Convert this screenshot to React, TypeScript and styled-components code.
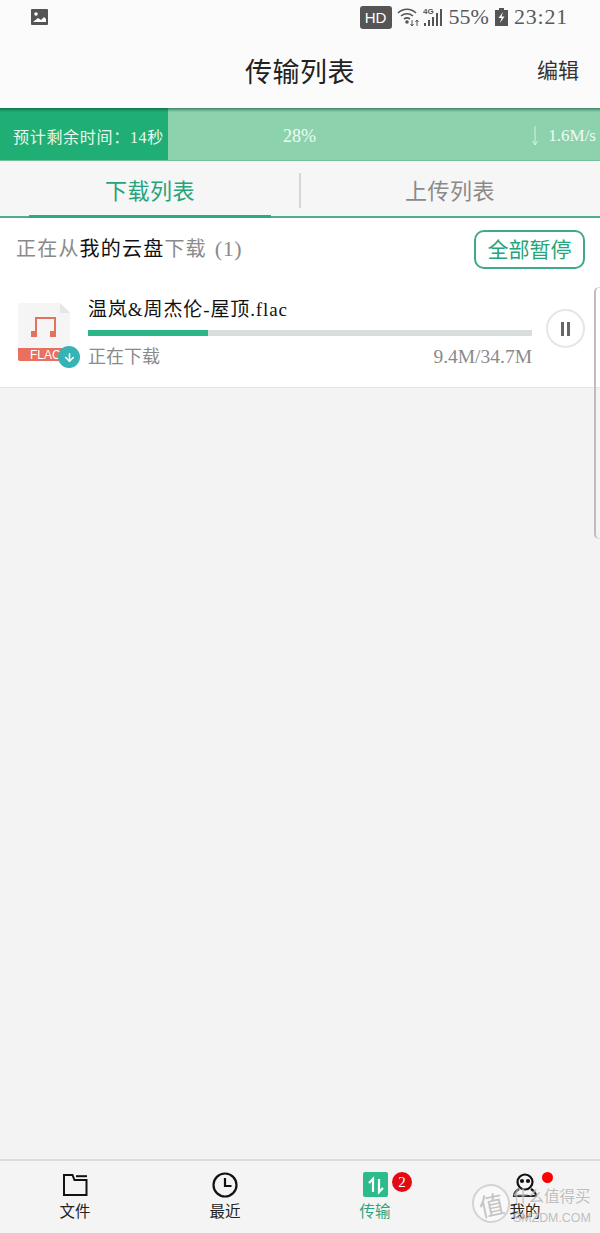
import styled, { createGlobalStyle } from "styled-components";
import { ArrowDown } from "lucide-react";

const FONT = `"Liberation Serif", "Noto Sans CJK SC", serif`;

const Global = createGlobalStyle`
  html, body { margin: 0; padding: 0; background: #f3f3f3; }
  * { box-sizing: border-box; }
`;

const Screen = styled.div`
  position: relative;
  width: 600px;
  height: 1233px;
  display: flex;
  flex-direction: column;
  overflow: hidden;
  background: #f3f3f3;
  font-family: ${FONT};
`;

const TopArea = styled.div`
  height: 108px;
  background: #fbfbfb;
  display: flex;
  flex-direction: column;
`;

const StatusBar = styled.div`
  height: 34px;
  display: flex;
  align-items: center;
  padding: 0 32px 0 31px;
  color: #555;
`;

const StatusRight = styled.div`
  margin-left: auto;
  display: flex;
  align-items: center;
`;

const HdBadge = styled.div`
  width: 32px;
  height: 23px;
  margin-right: 5px;
  border-radius: 3px;
  background: #555;
  color: #fff;
  font: 15px "Liberation Sans", sans-serif;
  display: flex;
  align-items: center;
  justify-content: center;
`;

const StatusText = styled.span<{ $left: number; $spacing?: number }>`
  margin-left: ${(p) => p.$left}px;
  font-size: 22px;
  line-height: 34px;
  letter-spacing: ${(p) => p.$spacing ?? 0}px;
  color: #5a5a5a;
`;

const Header = styled.div`
  position: relative;
  flex: 1;
  display: flex;
  align-items: center;
  justify-content: center;
  padding-bottom: 1px;
`;

const Title = styled.div`
  font-size: 27px;
  letter-spacing: 0.5px;
  color: #222;
`;

const EditLink = styled.div`
  position: absolute;
  right: 21px;
  top: 24px;
  font-size: 21px;
  line-height: 27px;
  color: #333;
`;

const ProgressBanner = styled.div`
  position: relative;
  height: 53px;
  display: flex;
  align-items: center;
  background: #8cd3ad;
  color: #fff;
  border-bottom: 1px solid #75bd9b;
  &::before {
    content: "";
    position: absolute;
    left: 0;
    right: 0;
    top: 0;
    height: 4px;
    background: linear-gradient(rgba(0, 70, 50, 0.55), rgba(0, 70, 50, 0));
  }
`;

const Elapsed = styled.div`
  width: 168px;
  height: 100%;
  display: flex;
  align-items: center;
  padding: 4px 0 0 13px;
  background: #1fae74;
  font-size: 16px;
  letter-spacing: 0.7px;
  white-space: nowrap;
  color: #e8f7ef;
`;

const Percent = styled.div`
  flex: 1;
  padding: 4px 0 0 115px;
  font-size: 18px;
  color: #f0faf5;
`;

const Speed = styled.div`
  padding: 4px 4px 0 0;
  font-size: 17px;
  display: flex;
  align-items: center;
  gap: 9px;
  color: #f0faf5;
`;

const Tabs = styled.div`
  position: relative;
  height: 57px;
  display: flex;
  background: #f6f6f6;
  border-bottom: 2px solid #4fae90;
`;

const Tab = styled.div<{ $active?: boolean }>`
  position: relative;
  flex: 1;
  display: flex;
  align-items: center;
  justify-content: center;
  font-size: 22px;
  letter-spacing: 0.5px;
  color: ${(p) => (p.$active ? "#25a37c" : "#8a8a8a")};
  &::after {
    content: "";
    display: ${(p) => (p.$active ? "block" : "none")};
    position: absolute;
    left: 29px;
    right: 29px;
    bottom: -2px;
    height: 3px;
    background: #2aaa85;
  }
`;

const TabDivider = styled.div`
  position: absolute;
  left: 299px;
  top: 12px;
  width: 2px;
  height: 35px;
  background: #d6d6d6;
`;

const ListHead = styled.div`
  height: 62px;
  display: flex;
  align-items: center;
  justify-content: space-between;
  padding: 0 15px 0 16px;
  background: #fff;
`;

const ListCaption = styled.div`
  font-size: 20px;
  line-height: 26px;
  letter-spacing: 1.2px;
  color: #8a8a8a;
  span {
    margin-left: 8px;
    font-size: 22px;
    letter-spacing: 0.5px;
  }
  b {
    font-weight: 400;
    color: #111;
  }
`;

const PauseAll = styled.button`
  width: 111px;
  height: 39px;
  padding: 0 0 2px;
  background: #fff;
  border: 2px solid #3fa98a;
  border-radius: 10px;
  color: #25a37c;
  font-family: ${FONT};
  font-size: 21px;
`;

const FileRow = styled.div`
  height: 108px;
  display: flex;
  align-items: center;
  padding: 0 15px 0 18px;
  background: #fff;
  border-bottom: 1px solid #e6e6e6;
`;

const FileIconWrap = styled.div`
  position: relative;
  width: 52px;
  height: 58px;
  margin-right: 18px;
  margin-top: -3px;
`;

const DownloadDot = styled.div`
  position: absolute;
  right: -10px;
  bottom: -7px;
  width: 22px;
  height: 22px;
  border-radius: 50%;
  background: #35b3b5;
  color: #fff;
  display: flex;
  align-items: center;
  justify-content: center;
`;

const FileInfo = styled.div`
  width: 444px;
  display: flex;
  flex-direction: column;
`;

const FileName = styled.div`
  font-size: 19px;
  line-height: 24px;
  letter-spacing: 0.9px;
  color: #111;
`;

const Track = styled.div`
  height: 6px;
  margin: 8px 0 9px;
  background: #d8dedc;
`;

const Fill = styled.div`
  height: 100%;
  background: #2bb588;
`;

const FileMeta = styled.div`
  display: flex;
  justify-content: space-between;
  font-size: 18px;
  line-height: 24px;
  color: #8a8a8a;
`;

const FileSize = styled.span`
  font-size: 19.5px;
`;

const PauseButton = styled.div`
  width: 39px;
  height: 39px;
  margin-left: auto;
  margin-top: -10px;
  border: 2px solid #e6e6e6;
  border-radius: 50%;
  display: flex;
  align-items: center;
  justify-content: center;
  gap: 3px;
  i {
    width: 3px;
    height: 14px;
    background: #666;
  }
`;

const Empty = styled.div`
  flex: 1;
`;

const BottomNav = styled.div`
  height: 74px;
  display: grid;
  grid-template-columns: repeat(4, 1fr);
  background: #f4f4f4;
  border-top: 2px solid #dcdcdc;
`;

const NavItem = styled.div<{ $active?: boolean }>`
  position: relative;
  display: flex;
  flex-direction: column;
  align-items: center;
  padding-top: 11px;
  font-size: 15.5px;
  line-height: 20px;
  color: ${(p) => (p.$active ? "#2aa583" : "#222")};
  svg {
    display: block;
    margin-bottom: 4px;
  }
`;

const NavBadge = styled.div`
  position: absolute;
  left: 92px;
  top: 11px;
  width: 20px;
  height: 20px;
  border-radius: 50%;
  background: #e30a14;
  color: #fff;
  font-size: 15px;
  display: flex;
  align-items: center;
  justify-content: center;
`;

const NavDot = styled.div`
  position: absolute;
  left: 92px;
  top: 11px;
  width: 11px;
  height: 11px;
  border-radius: 50%;
  background: #f00;
`;

const ScrollHandle = styled.div`
  position: absolute;
  left: 594px;
  top: 287px;
  width: 10px;
  height: 252px;
  border: 1px solid #dcdcdc;
  border-left: 2px solid #bdbdbd;
  border-radius: 6px;
`;

const Watermark = styled.div`
  position: absolute;
  left: 472px;
  top: 1184px;
  display: flex;
  align-items: flex-start;
  gap: 3px;
  opacity: 0.85;
`;

const WatermarkLogo = styled.div`
  width: 38px;
  height: 39px;
  border-radius: 50%;
  border: 2px solid #cfcfcf;
  background: rgba(255, 255, 255, 0.55);
  color: #bcbcbc;
  font: 25px "Noto Sans CJK SC", sans-serif;
  transform: rotate(-12deg);
  display: flex;
  align-items: center;
  justify-content: center;
`;

const WatermarkText = styled.div`
  display: flex;
  flex-direction: column;
  margin-top: 3px;
  color: #b5b5b5;
  font-family: "Liberation Sans", "Noto Sans CJK SC", sans-serif;
  text-shadow: 0 0 2px #fff;
  span:first-child {
    font-size: 15.5px;
    line-height: 20px;
  }
  span:last-child {
    font-size: 12.4px;
    line-height: 22px;
    white-space: nowrap;
  }
`;

const FlacLabel = styled.text`
  font-family: "Liberation Sans", sans-serif;
  font-size: 12px;
  fill: #fff;
`;

export default function App() {
  return (
    <Screen>
      <Global />
      <TopArea>
        <StatusBar>
          <svg width="17" height="16" viewBox="0 0 17 16">
            <rect width="17" height="16" rx="1" fill="#555" />
            <circle cx="5" cy="5" r="1.8" fill="#fff" />
            <path d="M2 13l5-4 3 2 3-3 2 2v3z" fill="#fff" />
          </svg>
          <StatusRight>
            <HdBadge>HD</HdBadge>
            <svg width="24" height="22" viewBox="0 0 24 22" fill="none" stroke="#555" strokeWidth="1.6">
              <path d="M1 7c5-5 13-5 18 0" />
              <path d="M4 10c3.500-3 8.500-3 12 0" />
              <path d="M7 13c2-1.500 4-1.500 6 0" />
              <circle cx="10" cy="16" r="1" fill="#555" />
              <path d="M15 14v6M13.500 18l1.500 2 1.500-2M20 20v-6M18.500 16l1.500-2 1.500 2" strokeWidth="1" />
            </svg>
            <svg width="20" height="20" viewBox="0 0 20 20" style={{ marginLeft: 2 }}>
              <text x="0" y="7" fontSize="8" fontWeight="700" fontFamily="Liberation Sans" fill="#555">4G</text>
              <path d="M1 16h2v3H1zM5 13h2v6H5zM9 10h2v9H9zM13 6h2v13h-2zM17 2h2v17h-2z" fill="#555" />
            </svg>
            <StatusText $left={6}>55%</StatusText>
            <svg width="13" height="18" viewBox="0 0 13 18" style={{ marginLeft: 6 }}>
              <path d="M4 0h5v2h4v16H0V2h4z" fill="#555" />
              <path d="M8 4L3.500 10h3l-1.500 5 4.500-6.500h-3z" fill="#fff" />
            </svg>
            <StatusText $left={6} $spacing={0.8}>23:21</StatusText>
          </StatusRight>
        </StatusBar>
        <Header>
          <Title>传输列表</Title>
          <EditLink>编辑</EditLink>
        </Header>
      </TopArea>

      <ProgressBanner>
        <Elapsed>预计剩余时间：14秒</Elapsed>
        <Percent>28%</Percent>
        <Speed>
          <svg width="8" height="20" viewBox="0 0 8 20" fill="none" stroke="#e8f7ef" strokeWidth="0.8">
            <path d="M4 0v19M1.500 15l2.500 4 2.500-4" />
          </svg>
          1.6M/s
        </Speed>
      </ProgressBanner>

      <Tabs>
        <Tab $active>下载列表</Tab>
        <TabDivider />
        <Tab>上传列表</Tab>
      </Tabs>

      <ListHead>
        <ListCaption>
          正在从<b>我的云盘</b>下载<span>(1)</span>
        </ListCaption>
        <PauseAll>全部暂停</PauseAll>
      </ListHead>

      <FileRow>
        <FileIconWrap>
          <svg width="52" height="58" viewBox="0 0 52 58">
            <path d="M1 0h41l10 10v36H0V1a1 1 0 0 1 1-1z" fill="#f5f5f5" />
            <path d="M42 0l10 10h-9a1 1 0 0 1-1-1z" fill="#e6e6e6" />
            <path d="M18 30V15h19v15" fill="none" stroke="#e2735c" strokeWidth="2" />
            <rect x="13" y="28" width="6" height="6" fill="#e2735c" />
            <rect x="32" y="28" width="6" height="6" fill="#e2735c" />
            <path d="M0 45h52v11a2 2 0 0 1-2 2H2a2 2 0 0 1-2-2z" fill="#e8705c" />
            <FlacLabel x="12" y="55.500">FLAC</FlacLabel>
          </svg>
          <DownloadDot>
            <ArrowDown size={13} strokeWidth={3} />
          </DownloadDot>
        </FileIconWrap>
        <FileInfo>
          <FileName>温岚&amp;周杰伦-屋顶.flac</FileName>
          <Track>
            <Fill style={{ width: `${(9.4 / 34.7) * 100}%` }} />
          </Track>
          <FileMeta>
            <span>正在下载</span>
            <FileSize>9.4M/34.7M</FileSize>
          </FileMeta>
        </FileInfo>
        <PauseButton>
          <i />
          <i />
        </PauseButton>
      </FileRow>

      <Empty />

      <BottomNav>
        <NavItem>
          <svg width="26" height="26" viewBox="0 0 26 26" fill="none" stroke="#111" strokeWidth="2">
            <path d="M2 3v20h22.500V8H12.500L10.500 3z" />
            <path d="M14 4.200h11" />
          </svg>
          文件
        </NavItem>
        <NavItem>
          <svg width="26" height="26" viewBox="0 0 26 26" fill="none" stroke="#111" strokeWidth="2.200">
            <circle cx="13" cy="13" r="11.500" />
            <path d="M13 6v8h6.500" />
          </svg>
          最近
        </NavItem>
        <NavItem $active>
          <svg width="25" height="26" viewBox="0 0 25 26">
            <rect width="25" height="25" rx="2" fill="#2dbb8c" />
            <path d="M6 11l4-4v13M20 16l-4 4V7" fill="none" stroke="#fff" strokeWidth="2.200" />
          </svg>
          传输
          <NavBadge>2</NavBadge>
        </NavItem>
        <NavItem>
          <svg width="26" height="26" viewBox="0 0 26 26" fill="none" stroke="#111" strokeWidth="2.200">
            <circle cx="13" cy="10" r="7.500" />
            <circle cx="10" cy="9" r="1" fill="#111" />
            <circle cx="16" cy="9" r="1" fill="#111" />
            <path d="M7 17c-3 2-5 4-5 7h22c0-3-2-5-5-7" />
          </svg>
          我的
          <NavDot />
        </NavItem>
      </BottomNav>

      <ScrollHandle />
      <Watermark>
        <WatermarkLogo>值</WatermarkLogo>
        <WatermarkText>
          <span>什么值得买</span>
          <span>SMZDM.COM</span>
        </WatermarkText>
      </Watermark>
    </Screen>
  );
}
